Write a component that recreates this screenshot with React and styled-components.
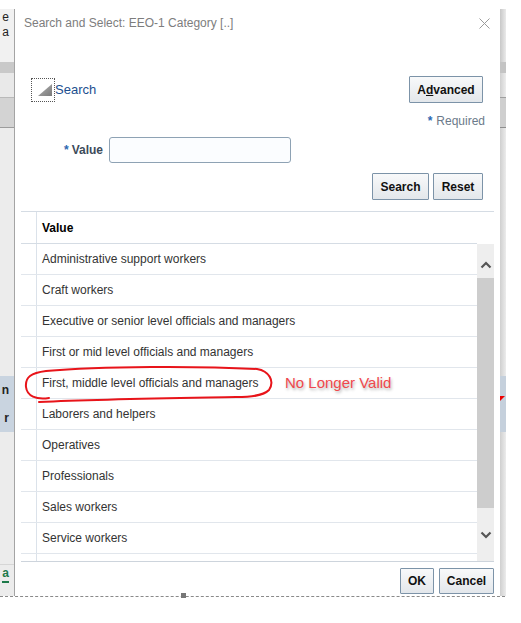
import React from 'react';
import styled, { createGlobalStyle } from 'styled-components';

const GlobalStyle = createGlobalStyle`
    body {
        margin: 0;
        background: #fff;
        font-family: "Liberation Sans", Arial, sans-serif;
        font-size: 12px;
        color: #333;
    }
`;

const Page = styled.div`
    width: 521px;
    height: 623px;
    padding-top: 9px;
    box-sizing: border-box;
    overflow: hidden;
`;

const Frame = styled.div`
    position: relative;
    display: flex;
    width: 505px;
    height: 587px;
    border-bottom: 1px dashed #8a8a8a;
`;

const ResizeGrip = styled.span`
    position: absolute;
    left: 181px;
    bottom: -2px;
    width: 5px;
    height: 5px;
    background: #777;
`;

// backdrop of the page behind the dialog
const BackStrip = styled.div`
    width: ${p => p.w}px;
    display: flex;
    flex-direction: column;
    flex-shrink: 0;
    overflow: hidden;
    border-right: ${p => (p.edge ? '1px solid #a4a4a4' : 'none')};
    box-shadow: ${p => (p.edge ? 'inset -4px 0 3px -2px #cfcfcf' : 'none')};
`;

const BackSeg = styled.div`
    position: relative;
    height: ${p => p.h}px;
    flex-shrink: 0;
    background: ${p => p.bg};
    border-bottom: ${p => (p.line ? `1px solid ${p.line}` : 'none')};
    box-sizing: border-box;
    display: flex;
    flex-direction: column;
    align-items: flex-end;
    justify-content: ${p => p.justify || 'flex-start'};
    padding-right: 5px;
    font-size: 12px;
    font-weight: ${p => (p.bold ? 700 : 400)};
    color: ${p => p.fg || '#222'};
    line-height: 15px;
    white-space: nowrap;
`;

const Fragment = styled.span`
    margin-top: ${p => p.mt || 0}px;
    border-bottom: ${p => (p.under ? '2px solid #1d7a4a' : 'none')};
`;

const RedMark = styled.span`
    position: absolute;
    left: 0;
    top: 20px;
    width: 0;
    height: 0;
    border-top: 5px solid #e00;
    border-right: 5px solid transparent;
`;

const Dialog = styled.div`
    position: relative;
    width: 485px;
    flex-shrink: 0;
    background: #fff;
    display: flex;
    flex-direction: column;
`;

const TitleBar = styled.div`
    height: 28px;
    display: flex;
    align-items: center;
    justify-content: space-between;
    padding: 0 10px 0 9px;
`;

const Title = styled.span`
    color: #7d7d7d;
    font-size: 12px;
`;

const SearchPanel = styled.div`
    padding: 39px 17px 0 16px;
    display: flex;
    flex-direction: column;
`;

const HeaderRow = styled.div`
    height: 27px;
    display: flex;
    align-items: center;
    justify-content: space-between;
`;

const Disclosure = styled.div`
    display: flex;
    align-items: center;
`;

const DisclosureBox = styled.span`
    width: 22px;
    height: 22px;
    border: 1px dotted #555;
    display: block;
`;

const SearchLink = styled.a`
    color: #1c4f8f;
    font-size: 13px;
    text-decoration: none;
`;

const Button = styled.button`
    width: ${p => p.w}px;
    height: ${p => p.h || 27}px;
    padding: 0;
    border: 1px solid #7c93a8;
    border-radius: 1px;
    background: linear-gradient(#f8f9fa, #e3e7eb);
    font-family: "Liberation Sans", Arial, sans-serif;
    font-size: 12px;
    font-weight: 700;
    color: #111;
    u { text-decoration: underline; }
`;

const RequiredRow = styled.div`
    margin-top: 11px;
    height: 14px;
    display: flex;
    justify-content: flex-end;
    align-items: center;
    margin-right: -2px;
    color: #6b7a8a;
    font-size: 12px;
`;

const Star = styled.span`
    color: #2c68b1;
    font-weight: 700;
    margin-right: ${p => p.gap || 4}px;
`;

const ValueRow = styled.div`
    margin-top: 9px;
    margin-left: -16px;
    display: flex;
    align-items: center;
    gap: 6px;
`;

const FieldLabel = styled.label`
    width: 88px;
    text-align: right;
    font-weight: 700;
    color: #3d4b5a;
    font-size: 12px;
`;

const TextInput = styled.input`
    width: 182px;
    height: 26px;
    box-sizing: border-box;
    border: 1px solid #8ea2b4;
    border-radius: 3px;
    background: #fbfdff;
`;

const ButtonRow = styled.div`
    margin-top: 10px;
    display: flex;
    justify-content: flex-end;
    gap: 4px;
`;

const Table = styled.div`
    margin: 11px 6px 0 6px;
    border-top: 1px solid #d5dce4;
    border-bottom: 1px solid #cdd4dc;
`;

const HeadRow = styled.div`
    display: flex;
    height: 31px;
    border-bottom: 1px solid #d5dce4;
    margin-right: 17px;
`;

const IndexCell = styled.div`
    width: 15px;
    border-right: 1px solid #dbe2ea;
    flex-shrink: 0;
`;

const Cell = styled.div`
    flex: 1;
    display: flex;
    align-items: center;
    padding-left: 5px;
    font-weight: ${p => (p.head ? 700 : 400)};
    color: ${p => (p.head ? '#000' : '#333')};
    font-size: 12px;
    white-space: nowrap;
`;

const Body = styled.div`
    display: flex;
    height: 317px;
    overflow: hidden;
`;

const Rows = styled.div`
    flex: 1;
`;

const Row = styled.div`
    display: flex;
    height: 30px;
    border-bottom: 1px solid #e1e6ec;
`;

const Scrollbar = styled.div`
    width: 17px;
    display: flex;
    flex-direction: column;
    background: #eeeeee;
`;

const ScrollEnd = styled.div`
    height: ${p => p.h}px;
    flex: ${p => (p.h ? 'none' : 1)};
    display: flex;
    align-items: ${p => p.align || 'center'};
    justify-content: center;
    padding-bottom: ${p => p.pb || 0}px;
    box-sizing: border-box;
`;

const Thumb = styled.div`
    height: 230px;
    background: #cdcdcd;
`;

const Footer = styled.div`
    padding: 6px 6px 0 0;
    display: flex;
    justify-content: flex-end;
    gap: 5px;
`;

const Annotation = styled.svg`
    position: absolute;
    left: 0;
    top: 0;
    pointer-events: none;
`;

const Note = styled.span`
    position: absolute;
    left: 270px;
    top: 365px;
    color: #f0484c;
    font-size: 15px;
    line-height: 18px;
    text-shadow: 1px 2px 3px rgba(0, 0, 0, 0.3);
`;

const values = [
    'Administrative support workers',
    'Craft workers',
    'Executive or senior level officials and managers',
    'First or mid level officials and managers',
    'First, middle level officials and managers',
    'Laborers and helpers',
    'Operatives',
    'Professionals',
    'Sales workers',
    'Service workers',
    '',
];

function Chevron({ up }) {
    return (
        <svg width="12" height="8" viewBox="0 0 12 8">
            <path
                d={up ? 'M1.5 6.5 L6 2 L10.5 6.5' : 'M1.5 1.5 L6 6 L10.5 1.5'}
                fill="none"
                stroke="#555"
                strokeWidth="2.2"
            />
        </svg>
    );
}

function LeftBackdrop() {
    return (
        <BackStrip w={14} edge>
            <BackSeg h={53} bg="#f1f1f1">
                <Fragment mt={1}>e</Fragment>
                <Fragment>a</Fragment>
            </BackSeg>
            <BackSeg h={11} bg="#c9c9c9" />
            <BackSeg h={25} bg="#e9e9e9" line="#b9b9b9" />
            <BackSeg h={30} bg="#d3d3d3" line="#9c9c9c" />
            <BackSeg h={248} bg="#ececec" />
            <BackSeg h={56} bg="#c9d4e0" bold justify="space-around">
                <Fragment>n</Fragment>
                <Fragment>r</Fragment>
            </BackSeg>
            <BackSeg h={133} bg="#ececec" line="#d6d6d6" />
            <BackSeg h={31} bg="#ececec" fg="#1d7a4a" bold>
                <Fragment mt={1} under>a</Fragment>
            </BackSeg>
        </BackStrip>
    );
}

function RightBackdrop() {
    return (
        <BackStrip w={6}>
            <BackSeg h={53} bg="linear-gradient(90deg, #c8c8c8, #eaeaea)" />
            <BackSeg h={11} bg="#c4c4c4" />
            <BackSeg h={25} bg="linear-gradient(90deg, #d0d0d0, #ededed)" line="#9f9f9f" />
            <BackSeg h={30} bg="#cfcfcf" line="#8e8e8e" />
            <BackSeg h={248} bg="linear-gradient(90deg, #cfcfcf, #ececec)" />
            <BackSeg h={56} bg="#c5d0dc">
                <RedMark />
            </BackSeg>
            <BackSeg h={164} bg="linear-gradient(90deg, #cfcfcf, #ececec)" />
        </BackStrip>
    );
}

export default function App() {
    return (
        <Page>
            <GlobalStyle />
            <Frame>
                <LeftBackdrop />
                <Dialog>
                    <TitleBar>
                        <Title>Search and Select: EEO-1 Category [..]</Title>
                        <svg width="11" height="11" viewBox="0 0 11 11">
                            <path d="M0.5 0.5 L10.5 10.5 M10.5 0.5 L0.5 10.5" stroke="#9a9a9a" strokeWidth="1" />
                        </svg>
                    </TitleBar>

                    <SearchPanel>
                        <HeaderRow>
                            <Disclosure>
                                <DisclosureBox>
                                    <svg width="22" height="22" viewBox="0 0 22 22">
                                        <defs>
                                            <linearGradient id="tri" x1="0" y1="0" x2="1" y2="1">
                                                <stop offset="0" stopColor="#b4b4b4" />
                                                <stop offset="1" stopColor="#7a7a7a" />
                                            </linearGradient>
                                        </defs>
                                        <polygon points="20,5 20,17 6,17" fill="url(#tri)" />
                                    </svg>
                                </DisclosureBox>
                                <SearchLink href="#">Search</SearchLink>
                            </Disclosure>
                            <Button w={74}>
                                A<u>d</u>vanced
                            </Button>
                        </HeaderRow>

                        <RequiredRow>
                            <Star>*</Star>Required
                        </RequiredRow>

                        <ValueRow>
                            <FieldLabel>
                                <Star gap={3}>*</Star>Value
                            </FieldLabel>
                            <TextInput type="text" />
                        </ValueRow>

                        <ButtonRow>
                            <Button w={57}>Search</Button>
                            <Button w={50}>Reset</Button>
                        </ButtonRow>
                    </SearchPanel>

                    <Table>
                        <HeadRow>
                            <IndexCell />
                            <Cell head>Value</Cell>
                        </HeadRow>
                        <Body>
                            <Rows>
                                {values.map((v, i) => (
                                    <Row key={i}>
                                        <IndexCell />
                                        <Cell>{v}</Cell>
                                    </Row>
                                ))}
                            </Rows>
                            <Scrollbar>
                                <ScrollEnd h={34} align="flex-end" pb={9}>
                                    <Chevron up />
                                </ScrollEnd>
                                <Thumb />
                                <ScrollEnd>
                                    <Chevron />
                                </ScrollEnd>
                            </Scrollbar>
                        </Body>
                    </Table>

                    <Footer>
                        <Button w={34} h={26}>OK</Button>
                        <Button w={55} h={26}>Cancel</Button>
                    </Footer>

                    <Annotation width="485" height="587" viewBox="14 9 485 587">
                        <path
                            d="M48 398 C35 400, 26 396, 25 387 C24 377, 30 373, 45 371 C100 366, 200 366, 256 369 C268 371, 274 381, 268 390 C262 396, 250 397, 235 397 C180 398, 100 399, 38 402"
                            fill="none"
                            stroke="#e8141a"
                            strokeWidth="2"
                            strokeLinecap="round"
                        />
                    </Annotation>
                    <Note>No Longer Valid</Note>
                </Dialog>
                <RightBackdrop />
                <ResizeGrip />
            </Frame>
        </Page>
    );
}
